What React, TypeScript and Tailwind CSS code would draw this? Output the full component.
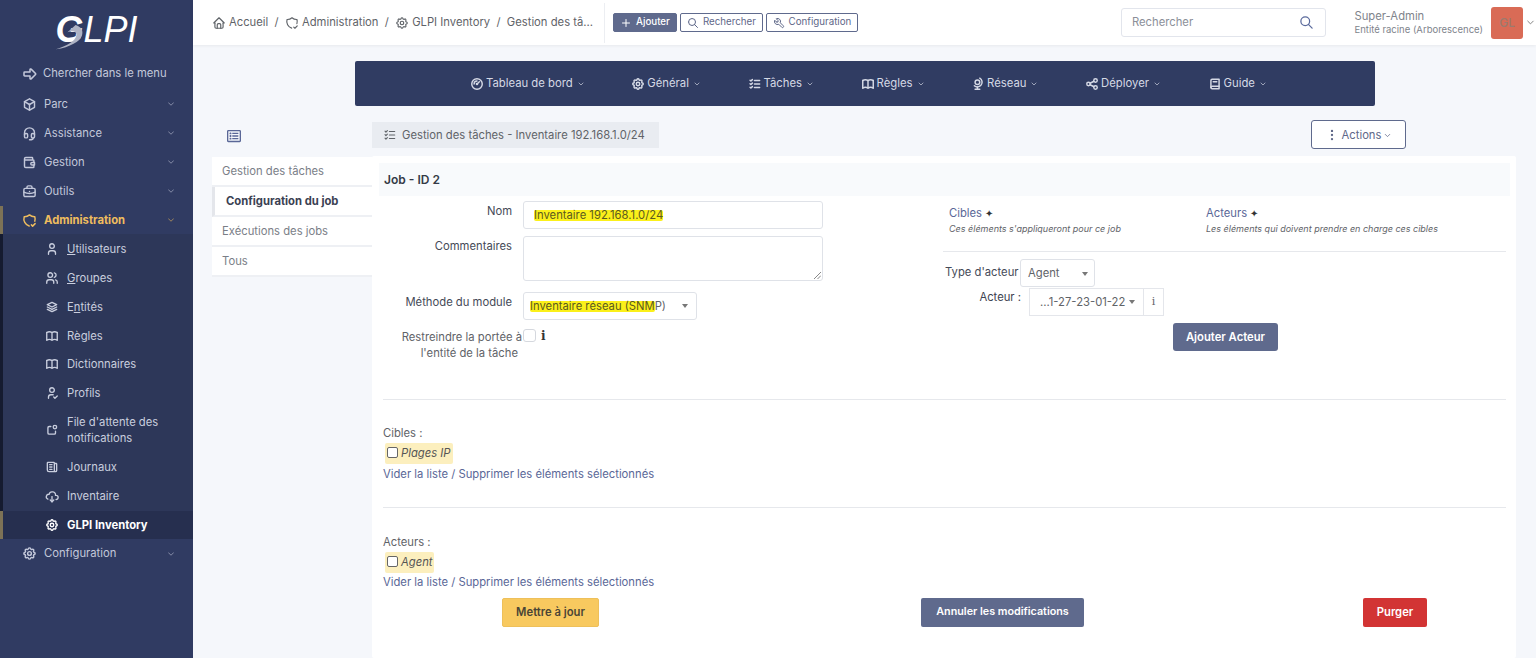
import React from "react";
import {
  TbArrowBigRight, TbBox, TbHeadset, TbWallet, TbBriefcase, TbShieldCheck, TbUser, TbUsers, TbStack2, TbBook,
  TbUserCheck, TbNotification, TbNews, TbCloudDownload, TbSettings, TbChevronDown, TbHome, TbPlus, TbSearch, TbTool,
  TbGauge, TbListCheck, TbGlobe, TbShare, TbBook2, TbDotsVertical,
} from "react-icons/tb";
import { FaRegListAlt } from "react-icons/fa";

type Ic = React.ComponentType<{ className?: string }>;

function TopItem({ icon: Icon, label, active }: { icon: Ic; label: string; active?: boolean }) {
  return (
    <div className={`flex items-center h-[28.9px] pr-[17px] ${active ? "text-[#efbd5e] font-bold border-l-[3px] border-[#7d7256] pl-[19px]" : "text-[#c3c8da] pl-[22px]"}`}>
      <Icon className="w-[15px] h-[15px] mr-[7px] shrink-0 stroke-[2.3]" />
      <span className="flex-1">{label}</span>
      <TbChevronDown className="w-[10px] h-[10px] opacity-70" />
    </div>
  );
}

function SubItem({ icon: Icon, children, active, tall }: { icon: Ic; children: React.ReactNode; active?: boolean; tall?: boolean }) {
  return (
    <div className={`flex items-center ${tall ? "h-[45px]" : "h-[28.9px]"} pl-[45px] border-l-[3px] ${active ? "bg-[#262f4f] text-white font-bold border-[#7d7256]" : "text-[#c9cede] border-[#151b30]"}`}>
      <Icon className="w-[14px] h-[14px] mr-[8px] -ml-[3px] shrink-0 stroke-[2.3]" />
      <span className="leading-[16px]">{children}</span>
    </div>
  );
}

function Sidebar() {
  return (
    <aside className="w-[193px] shrink-0 bg-[#303b62] h-full text-[11.25px]">
      <div className="h-[59px] pt-[9px] text-center text-white italic text-[36px] leading-[42px] font-['Liberation_Sans',sans-serif]">
        <span className="relative inline-block">
          <span className="font-bold">G</span>LPI
          <svg viewBox="0 0 40 40" className="absolute left-[-1px] top-[5px] w-[36px] h-[40px]">
            <path d="M2 37 C14 33 24 28 25 21 C25 17 21 16 15 18 L24 10 C30 12 33 16 31 22 C29 28 18 35 2 37Z" fill="#aeb3c4" />
          </svg>
        </span>
      </div>
      <div className="flex items-center h-[29px] pl-[22px] text-[#c3c8da]">
        <TbArrowBigRight className="w-[16px] h-[16px] mr-[5px] stroke-[2.3]" />
        Chercher dans le menu
      </div>
      <div className="h-[2px]" />
      <TopItem icon={TbBox} label="Parc" />
      <TopItem icon={TbHeadset} label="Assistance" />
      <TopItem icon={TbWallet} label="Gestion" />
      <TopItem icon={TbBriefcase} label="Outils" />
      <TopItem icon={TbShieldCheck} label="Administration" active />
      <div className="bg-[#2d3759]">
        <SubItem icon={TbUser}><span className="underline">U</span>tilisateurs</SubItem>
        <SubItem icon={TbUsers}><span className="underline">G</span>roupes</SubItem>
        <SubItem icon={TbStack2}>E<span className="underline">n</span>tités</SubItem>
        <SubItem icon={TbBook}>Règles</SubItem>
        <SubItem icon={TbBook}>Dictionnaires</SubItem>
        <SubItem icon={TbUserCheck}>Profils</SubItem>
        <SubItem icon={TbNotification} tall>File d'attente des<br />notifications</SubItem>
        <SubItem icon={TbNews}>Journaux</SubItem>
        <SubItem icon={TbCloudDownload}>Inventaire</SubItem>
        <SubItem icon={TbSettings} active>GLPI Inventory</SubItem>
      </div>
      <TopItem icon={TbSettings} label="Configuration" />
    </aside>
  );
}

function Crumb({ icon: Icon, label }: { icon?: Ic; label: string }) {
  return (
    <span className="flex items-center whitespace-nowrap">
      {Icon && <Icon className="w-[14px] h-[14px] mr-[3px]" />}
      {label}
    </span>
  );
}

function HeaderBtn({ icon: Icon, label, primary, w }: { icon: Ic; label: string; primary?: boolean; w: string }) {
  return (
    <div className={`flex items-center justify-center h-[19px] ${w} rounded-[2px] text-[9.75px] border whitespace-nowrap ${primary ? "bg-[#5f6a8d] border-[#5f6a8d] text-white font-medium" : "bg-white border-[#5f6a8d] text-[#5e6788]"}`}>
      <Icon className="w-[12px] h-[12px] mr-[4px]" />
      {label}
    </div>
  );
}

function Header() {
  return (
    <header className="h-[45px] bg-white shadow-[0_1px_3px_rgba(0,0,0,0.06)] flex items-center shrink-0 pl-[19px] text-[11.25px] text-[#5f6368]">
      <div className="flex items-center gap-[6.3px] border-r border-[#eceef2] h-[40px] w-[394px]">
        <Crumb icon={TbHome} label="Accueil" />
        <span>/</span>
        <Crumb icon={TbShieldCheck} label="Administration" />
        <span>/</span>
        <Crumb icon={TbSettings} label="GLPI Inventory" />
        <span>/</span>
        <Crumb label="Gestion des tâ..." />
      </div>
      <div className="flex items-center gap-[3px] ml-[8px]">
        <HeaderBtn icon={TbPlus} label="Ajouter" primary w="w-[64px]" />
        <HeaderBtn icon={TbSearch} label="Rechercher" w="w-[83px]" />
        <HeaderBtn icon={TbTool} label="Configuration" w="w-[92px]" />
      </div>
      <div className="ml-[263px] w-[206px] h-[29px] rounded-[3px] border border-[#e2e5ec] flex items-center pl-[10px] pr-[11px] text-[#8b8f99]">
        <span className="flex-1">Rechercher</span>
        <TbSearch className="w-[15px] h-[15px] text-[#5a6a9c]" />
      </div>
      <div className="ml-[28px] w-[137px] text-[#80848c]">
        <div className="text-[11.25px] leading-[14px]">Super-Admin</div>
        <div className="text-[9.5px] leading-[13px] whitespace-nowrap">Entité racine (Arborescence)</div>
      </div>
      <div className="w-[32px] h-[32px] bg-[#d96b56] rounded-[3px] flex items-center justify-center text-[#9c7a6e] text-[12px] font-medium">GL</div>
      <TbChevronDown className="w-[11px] h-[11px] ml-[2px] text-[#777]" />
    </header>
  );
}

function NavItem({ icon: Icon, label }: { icon: Ic; label: string }) {
  return (
    <div className="flex items-center text-[#d5d9e5] text-[11.3px]">
      <Icon className="w-[14px] h-[14px] mr-[2px] stroke-[2.5]" />
      {label}
      <TbChevronDown className="w-[8px] h-[8px] ml-[4px]" />
    </div>
  );
}

function Tab({ label, active }: { label: string; active?: boolean }) {
  return (
    <div className={`h-[30px] flex items-center border-b-2 border-[#eef0f4] ${active ? "bg-white font-bold text-[#3b4152] pl-[11px] border-l-[3px] border-l-[#e4e6eb] -mr-px" : "text-[#7a7e87] pl-[10px] bg-white"}`}>
      {label}
    </div>
  );
}

function Caret() {
  return <span className="w-0 h-0 border-x-[3px] border-x-transparent border-t-[4px] border-t-[#777]" />;
}

function Mark({ children }: { children: React.ReactNode }) {
  return <span className="inline-block h-[11px] leading-[11px] bg-[#fbf01a] rounded-[2px] text-[#5b5a20]">{children}</span>;
}

function FormRow({ label, children, className = "" }: { label: React.ReactNode; children: React.ReactNode; className?: string }) {
  return (
    <div className={`flex ${className}`}>
      <div className="w-[133px] text-right leading-[16px] pt-[1.5px] text-[#454a57]">{label}</div>
      <div className="ml-[11px]">{children}</div>
    </div>
  );
}

function Links() {
  return (
    <div className="leading-[16px] text-[#5a6797] ml-[4px]">Vider la liste / Supprimer les éléments sélectionnés</div>
  );
}

function Tag({ label }: { label: string }) {
  return (
    <div className="ml-[6px] inline-flex items-center h-[21px] bg-[#fcefbe] rounded-[2px] px-[2px] italic text-[#555]">
      <span className="w-[11px] h-[11px] border border-[#666] rounded-[2px] bg-white mr-[3px] mb-[3px]" />
      {label}
    </div>
  );
}

function Card() {
  return (
    <div className="flex-1 bg-white pt-[7px] pl-[7px] pr-[6px] text-[11.25px] text-[#5f6368] rounded-[2px]">
      <div className="h-[33px] bg-[#f8fafc] flex items-center pt-[1px] pl-[5px] text-[12px] font-semibold text-[#343a46]">Job - ID 2</div>
      <div className="flex h-[203px]">
        <div className="w-[564px] pt-[5px]">
          <FormRow label="Nom">
            <div className="w-[300px] h-[28px] border border-[#dfe2e8] rounded-[3px] flex items-center pl-[10px] text-[#5f6368]"><Mark>Inventaire 192.168.1.0/24</Mark></div>
          </FormRow>
          <FormRow label="Commentaires" className="mt-[7px]">
            <div className="relative w-[300px] h-[45px] border border-[#dfe2e8] rounded-[3px]">
              <svg viewBox="0 0 8 8" className="absolute right-[1px] bottom-[1px] w-[7px] h-[7px]"><path d="M0 8L8 0M4 8L8 4" stroke="#777" strokeWidth="1" /></svg>
            </div>
          </FormRow>
          <FormRow label="Méthode du module" className="mt-[11px]">
            <div className="w-[174px] h-[28px] border border-[#dfe2e8] rounded-[3px] flex items-center pl-[6px] pr-[8px] justify-between">
              <span><Mark>Inventaire réseau (SNM</Mark>P)</span>
              <Caret />
            </div>
          </FormRow>
          <div className="flex mt-[9px]">
            <div className="w-[143px] text-right leading-[16px] text-[#5f6368] whitespace-nowrap">Restreindre la portée à<br /><span className="pr-[4px]">l'entité de la tâche</span></div>
            <span className="ml-[1px] w-[13px] h-[13px] border border-[#d5d8de] rounded-[3px]" />
            <span className="ml-[5px] text-[#333] font-['DejaVu_Serif',serif] font-bold text-[12px] leading-[14px]">i</span>
          </div>
        </div>
        <div className="ml-0 w-[563px] pt-[9px]">
          <div className="flex pl-[6px] leading-[16px] text-[#5a6797]">
            <div className="w-[257px]">Cibles <span className="text-[#333] text-[10px]">✦</span></div>
            <div>Acteurs <span className="text-[#333] text-[10px]">✦</span></div>
          </div>
          <div className="flex pl-[6px] leading-[14px] mt-px text-[9px] italic text-[#5f6368]">
            <div className="w-[257px]">Ces éléments s'appliqueront pour ce job</div>
            <div>Les éléments qui doivent prendre en charge ces cibles</div>
          </div>
          <div className="h-px bg-[#e6e8ec] mt-[15px]" />
          <div className="flex items-start mt-[7px] pl-[2px]">
            <span className="w-[75px] leading-[16px] pt-[5px] text-[#454a57] whitespace-nowrap">Type d'acteur</span>
            <div className="w-[75px] h-[28px] pt-[1px] border border-[#dfe2e8] rounded-[3px] flex items-center pl-[7px] pr-[6px] justify-between"><span>Agent</span><Caret /></div>
          </div>
          <div className="flex items-start mt-px">
            <span className="w-[78px] text-right leading-[16px] pt-[1px] text-[#3d424f] whitespace-nowrap">Acteur :</span>
            <div className="ml-[8px] w-[115px] h-[28px] border border-[#e4e6eb] flex items-center pl-[10px] pr-[8px] justify-between whitespace-nowrap"><span>...1-27-23-01-22</span><Caret /></div>
            <div className="w-[20px] h-[28px] border border-l-0 border-[#e4e6eb] flex items-center justify-center font-['DejaVu_Serif',serif] text-[11px]">i</div>
          </div>
          <div className="mt-[7px] ml-[230px] w-[105px] h-[28px] bg-[#5f6a8d] rounded-[3px] text-white font-semibold flex items-center justify-center">Ajouter Acteur</div>
        </div>
      </div>
      <div className="h-px bg-[#e6e8ec] ml-[4px] mr-[4px]" />
      <div className="mt-[25px] ml-[4px] leading-[16px]">Cibles :</div>
      <div className="mt-[2px]"><Tag label="Plages IP" /></div>
      <div className="mt-[2px]"><Links /></div>
      <div className="h-px bg-[#e6e8ec] ml-[4px] mr-[4px] mt-[25px]" />
      <div className="mt-[26px] ml-[4px] leading-[16px]">Acteurs :</div>
      <div className="mt-[2px]"><Tag label="Agent" /></div>
      <div className="mt-[1px]"><Links /></div>
      <div className="flex mt-[8px] font-semibold">
        <div className="ml-[123px] w-[97px] h-[29px] rounded-[2px] bg-[#f8c95f] border border-[#eec05a] text-[#4a4536] flex items-center justify-center">Mettre à jour</div>
        <div className="ml-[322px] w-[163px] h-[29px] rounded-[2px] bg-[#5f6a8d] text-white flex items-center justify-center text-[10.75px]">Annuler les modifications</div>
        <div className="ml-[279px] w-[64px] h-[29px] rounded-[2px] bg-[#d23434] text-white flex items-center justify-center">Purger</div>
      </div>
    </div>
  );
}

export default function App() {
  return (
    <div className="w-[1536px] h-[658px] overflow-hidden flex font-['Inter',sans-serif]">
      <Sidebar />
      <main className="flex-1 bg-[#f5f7fb] flex flex-col min-w-0">
        <Header />
        <div className="mt-[16px] ml-[162px] w-[1020px] h-[45px] rounded-[2px] bg-[#303c62] flex items-center pl-[115px] gap-[46.6px] shrink-0">
          <NavItem icon={TbGauge} label="Tableau de bord" />
          <NavItem icon={TbSettings} label="Général" />
          <NavItem icon={TbListCheck} label="Tâches" />
          <NavItem icon={TbBook} label="Règles" />
          <NavItem icon={TbGlobe} label="Réseau" />
          <NavItem icon={TbShare} label="Déployer" />
          <NavItem icon={TbBook2} label="Guide" />
        </div>
        <div className="flex items-start mt-[14px] h-[36px] shrink-0">
          <div className="w-[179px] pl-[34px] pt-[9px]"><FaRegListAlt className="w-[14px] h-[14px] text-[#5a6797]" /></div>
          <div className="mt-[2px] h-[26px] w-[287px] bg-[#e9ecf1] flex items-center pl-[11px] text-[11.25px] text-[#5f6368] whitespace-nowrap">
            <TbListCheck className="w-[14px] h-[14px] mr-[5px]" />
            Gestion des tâches - Inventaire 192.168.1.0/24
          </div>
          <div className="ml-[652px] w-[95px] h-[29px] pt-[1px] border border-[#5f6a8d] rounded-[3px] bg-white flex items-center justify-center text-[11.25px] text-[#5e6788]">
            <TbDotsVertical className="w-[14px] h-[14px] mr-[3px]" />
            Actions
            <TbChevronDown className="w-[9px] h-[9px] ml-[2px]" />
          </div>
        </div>
        <div className="flex flex-1 pl-[19px] pr-[20px] min-h-0">
          <div className="w-[160px] text-[11.25px] pt-[1px] shrink-0">
            <Tab label="Gestion des tâches" />
            <Tab label="Configuration du job" active />
            <Tab label="Exécutions des jobs" />
            <Tab label="Tous" />
          </div>
          <Card />
        </div>
      </main>
    </div>
  );
}
